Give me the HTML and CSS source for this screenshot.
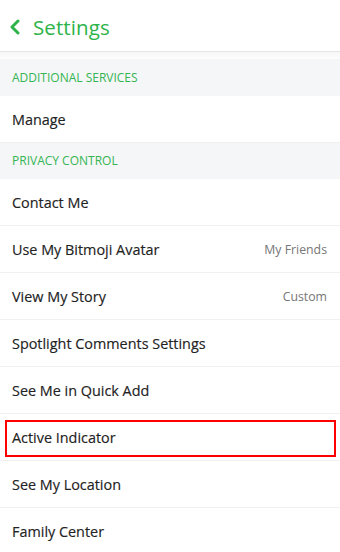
FILE: index.html
```html
<!DOCTYPE html>
<html>
<head>
<meta charset="utf-8">
<link rel="stylesheet" href="styles.css">
</head>
<body>
<div class="app">
  <header class="topbar">
    <svg class="back" width="12" height="16" viewBox="0 0 12 16"><path d="M9 2 L3 8 L9 14" fill="none" stroke="#2db34a" stroke-width="3" stroke-linecap="round" stroke-linejoin="round"/></svg>
    <h1 class="title">Settings</h1>
  </header>
  <div class="shadow"></div>
  <div class="section">ADDITIONAL SERVICES</div>
  <div class="row"><span>Manage</span></div>
  <div class="section">PRIVACY CONTROL</div>
  <div class="row"><span>Contact Me</span></div>
  <div class="row"><span>Use My Bitmoji Avatar</span><span class="value">My Friends</span></div>
  <div class="row"><span>View My Story</span><span class="value">Custom</span></div>
  <div class="row"><span>Spotlight Comments Settings</span></div>
  <div class="row"><span>See Me in Quick Add</span></div>
  <div class="row highlighted"><span>Active Indicator</span><div class="mark"></div></div>
  <div class="row"><span>See My Location</span></div>
  <div class="row last"><span>Family Center</span></div>
</div>
</body>
</html>
```

FILE: styles.css
```css
* { box-sizing: border-box; }
html, body { margin: 0; padding: 0; background: #fff; }
body { font-family: "Open Sans", "Noto Sans", sans-serif; color: #222; }
.app { width: 340px; height: 552px; overflow: hidden; }
.topbar { height: 52px; display: flex; align-items: center; padding-left: 9px; padding-top: 2px; border-bottom: 1px solid #e6e6e6; }
.back { margin-right: 12px; margin-top: 0; }
.title { margin: 0; font-size: 20.5px; font-weight: 400; color: #2db34a; letter-spacing: 0.1px; }
.shadow { height: 7px; background: linear-gradient(#f7f7f7, #fdfdfd); }
.section { height: 37px; background: #f5f6f8; color: #34b553; font-size: 12px; padding-left: 12px; display: flex; align-items: center; letter-spacing: 0; }
.row { position: relative; height: 47px; display: flex; align-items: center; justify-content: space-between; padding: 0 13px 0 12px; font-size: 14.4px; border-bottom: 1px solid #f0f0f0; -webkit-text-stroke: 0.15px #222; }
.row + .section { margin-top: -1px; }
.row.last { border-bottom: none; }
.value { font-size: 12.3px; color: #767676; -webkit-text-stroke: 0; }
.mark { position: absolute; left: 5px; right: 4px; top: 6px; bottom: 3px; border: 2.5px solid #f00; }
```
